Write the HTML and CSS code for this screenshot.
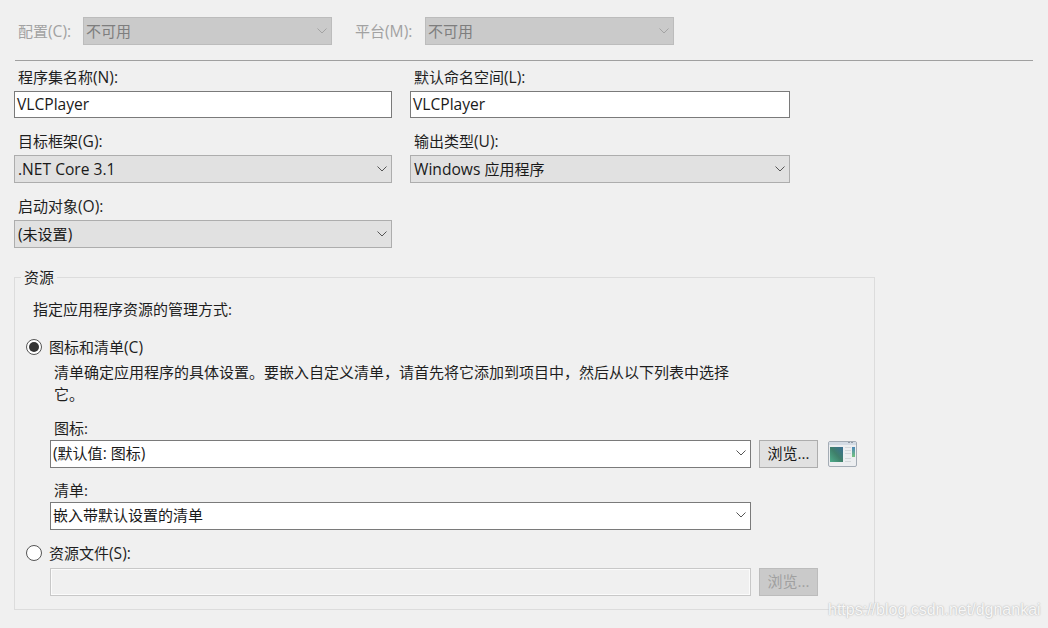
FILE: index.html
```html
<!DOCTYPE html>
<html lang="zh-CN">
<head>
<meta charset="utf-8">
<title>应用程序</title>
<link rel="stylesheet" href="styles.css">
</head>
<body>
<svg class="defs" width="0" height="0" aria-hidden="true">
  <symbol id="chev" viewBox="0 0 10 6"><path d="M0.5 0.5 5 5 9.5 0.5" fill="none" stroke="currentColor" stroke-width="1"/></symbol>
</svg>
<main class="page">
  <div class="topbar">
    <span class="top-label">配置<span class="lat">(C):</span></span>
    <div class="combo combo-off top-combo"><span>不可用</span><svg class="chev"><use href="#chev"/></svg></div>
    <span class="top-label top-label-2">平台<span class="lat">(M):</span></span>
    <div class="combo combo-off top-combo"><span>不可用</span><svg class="chev"><use href="#chev"/></svg></div>
  </div>
  <hr class="rule">
  <div class="form-grid">
    <div class="field">
      <label class="label">程序集名称<span class="lat">(N):</span></label>
      <div class="textbox lat">VLCPlayer</div>
    </div>
    <div class="field">
      <label class="label">默认命名空间<span class="lat">(L):</span></label>
      <div class="textbox lat">VLCPlayer</div>
    </div>
    <div class="field">
      <label class="label">目标框架<span class="lat">(G):</span></label>
      <div class="combo"><span class="lat">.NET Core 3.1</span><svg class="chev"><use href="#chev"/></svg></div>
    </div>
    <div class="field">
      <label class="label">输出类型<span class="lat">(U):</span></label>
      <div class="combo"><span><span class="lat">Windows </span>应用程序</span><svg class="chev"><use href="#chev"/></svg></div>
    </div>
    <div class="field">
      <label class="label">启动对象<span class="lat">(O):</span></label>
      <div class="combo"><span><span class="lat">(</span>未设置<span class="lat">)</span></span><svg class="chev"><use href="#chev"/></svg></div>
    </div>
  </div>
  <fieldset class="group">
    <legend class="legend">资源</legend>
    <div class="group-body">
      <p class="intro">指定应用程序资源的管理方式:</p>
      <div class="radio-row">
        <span class="radio radio-on"></span>
        <span>图标和清单<span class="lat">(C)</span></span>
      </div>
      <p class="desc">清单确定应用程序的具体设置。要嵌入自定义清单，请首先将它添加到项目中，然后从以下列表中选择它。</p>
      <label class="sub-label">图标:</label>
      <div class="picker-row">
        <div class="combo combo-white wide"><span><span class="lat">(</span>默认值<span class="lat">: </span>图标<span class="lat">)</span></span><svg class="chev"><use href="#chev"/></svg></div>
        <div class="btn">浏览...</div>
        <svg class="app-icon" width="30" height="26" viewBox="0 0 30 26">
          <defs>
            <linearGradient id="pic" x1="0" y1="1" x2="1" y2="0">
              <stop offset="0" stop-color="#4fae8c"/>
              <stop offset="0.5" stop-color="#3f7f6a"/>
              <stop offset="1" stop-color="#3a6f94"/>
            </linearGradient>
            <linearGradient id="side" x1="0" y1="0" x2="0" y2="1">
              <stop offset="0" stop-color="#4a86b8"/>
              <stop offset="1" stop-color="#74c47e"/>
            </linearGradient>
          </defs>
          <rect x="0.5" y="0.5" width="28" height="25" rx="1.5" fill="#eceef0" stroke="#a4acb5"/>
          <rect x="1" y="1" width="27" height="3" fill="#d3dbe4"/>
          <rect x="20" y="1" width="2" height="1" fill="#8f99a5"/>
          <rect x="23" y="1" width="2" height="1" fill="#8f99a5"/>
          <rect x="2" y="6" width="13" height="15" fill="url(#pic)"/>
          <rect x="17" y="6" width="6" height="1" fill="#d3d7da"/>
          <rect x="17" y="9" width="6" height="1" fill="#d3d7da"/>
          <rect x="17" y="12" width="6" height="1" fill="#d3d7da"/>
          <rect x="17" y="17" width="6" height="1" fill="#d3d7da"/>
          <rect x="17" y="20" width="6" height="1" fill="#d3d7da"/>
          <rect x="24" y="6" width="3" height="10" fill="url(#side)"/>
        </svg>
      </div>
      <label class="sub-label sub-label-2">清单:</label>
      <div class="combo combo-white wide"><span>嵌入带默认设置的清单</span><svg class="chev"><use href="#chev"/></svg></div>
      <div class="radio-row radio-row-2">
        <span class="radio"></span>
        <span>资源文件<span class="lat">(S):</span></span>
      </div>
      <div class="picker-row">
        <div class="textbox-off wide"></div>
        <div class="btn btn-off">浏览...</div>
      </div>
    </div>
  </fieldset>
  <div class="watermark">https://blog.csdn.net/dgnankai</div>
</main>
</body>
</html>
```
FILE: styles.css
```css
* { box-sizing: border-box; }
html, body { margin: 0; height: 100%; }
body {
  background: #f0f0f0;
  color: #1e1e1e;
  font-family: "Open Sans", "Noto Sans CJK SC", sans-serif;
  font-size: 15px;
  line-height: 20px;
  overflow: hidden;
}
.lat { font-size: 15.6px; }
.defs { position: absolute; }
.page { position: relative; width: 1048px; height: 628px; padding: 17px 15px 0 14px; }
.topbar { display: flex; align-items: center; height: 28px; }
.top-label { color: #a2a2a2; margin-left: 4px; width: 65px; }
.top-label-2 { margin-left: 23px; width: 70px; }
.top-combo { width: 249px; }
.rule { border: 0; border-top: 1px solid #a0a0a0; margin: 15px 0 0 1px; height: 0; }
.form-grid {
  display: grid;
  grid-template-columns: 378px 380px;
  column-gap: 18px;
  row-gap: 13px;
  margin-top: 6px;
}
.field { display: flex; flex-direction: column; }
.label { display: block; height: 24px; padding-left: 4px; line-height: 20px; }
.textbox {
  height: 27px;
  border: 1px solid #7a7a7a;
  background: #fff;
  padding-left: 2px;
  line-height: 25px;
  color: #1a1a1a;
}
.combo {
  display: flex;
  align-items: center;
  justify-content: space-between;
  height: 28px;
  border: 1px solid #adadad;
  background: #e1e1e1;
  padding: 0 4px 0 3px;
  color: #1a1a1a;
}
.chev { width: 10px; height: 6px; color: #555; }
.combo-off { background: #cacaca; border-color: #bcbcbc; color: #7e7e7e; padding-left: 2px; }
.combo-off .chev { color: #a3a3a3; }
.combo-white { background: #fff; border-color: #7a7a7a; padding-left: 2px; padding-bottom: 2px; }
.wide { width: 701px; }
.group {
  margin: 19px 0 0 0;
  width: 861px;
  height: 343px;
  border: 1px solid #dcdcdc;
  padding: 0;
  min-width: 0;
}
.legend { padding: 0 3px; margin-left: 6px; height: 20px; line-height: 20px; }
.group-body { padding-left: 35px; }
.intro { margin: 12px 0 0 -17px; height: 20px; }
.radio-row { display: flex; align-items: center; gap: 7px; height: 20px; margin: 18px 0 0 -24px; }
.radio {
  width: 16px;
  height: 16px;
  border-radius: 50%;
  border: 1px solid #555;
  background: #fff;
  flex: none;
  position: relative;
}
.radio-on::after {
  content: "";
  position: absolute;
  inset: 2px;
  border-radius: 50%;
  background: #333;
}
.desc { margin: 4px 0 0 4px; width: 680px; line-height: 22px; }
.sub-label { display: block; margin: 12px 0 0 4px; height: 23px; line-height: 22px; }
.sub-label-2 { margin-top: 11px; }
.picker-row { display: flex; align-items: flex-start; }
.btn {
  width: 59px;
  height: 28px;
  margin-left: 8px;
  border: 1px solid #adadad;
  background: #e1e1e1;
  text-align: center;
  line-height: 24px;
  color: #1a1a1a;
  flex: none;
}
.btn-off { background: #cacaca; border-color: #bcbcbc; color: #a0a0a0; }
.app-icon { margin: 1px 0 0 10px; flex: none; }
.radio-row-2 { margin-top: 13px; }
.radio-row-2 + .picker-row { margin-top: 5px; }
.textbox-off {
  height: 28px;
  border: 1px solid #c8c8c8;
  background: #f0f0f0;
  box-shadow: inset 0 0 0 1px #fbfbfb;
}
.watermark {
  position: absolute;
  left: 828px;
  top: 600px;
  font-family: "Liberation Sans", sans-serif;
  font-size: 16px;
  line-height: 20px;
  color: #f7f7f7;
  text-shadow: 0 0 2px #b8b8b8, 0 0 1px #c4c4c4;
}
```
